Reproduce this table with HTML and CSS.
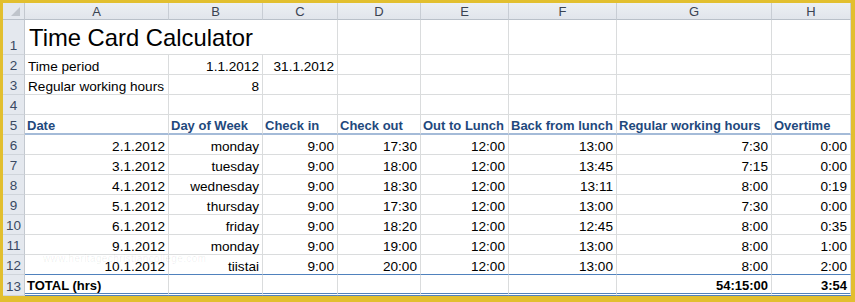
FILE: index.html
```html
<!DOCTYPE html>
<html>
<head>
<meta charset="utf-8">
<link rel="stylesheet" href="styles.css">
</head>
<body>
<div class="frame">
  <div class="sheet">
    <div class="corner"><span class="tri"></span></div>
    <div class="colhead">A</div><div class="colhead">B</div><div class="colhead">C</div><div class="colhead">D</div><div class="colhead">E</div><div class="colhead">F</div><div class="colhead">G</div><div class="colhead">H</div>

    <div class="rowhead">1</div>
    <div class="cell title span3">Time Card Calculator</div><div class="cell"></div><div class="cell"></div><div class="cell"></div><div class="cell"></div><div class="cell"></div>

    <div class="rowhead">2</div>
    <div class="cell">Time period</div><div class="cell num">1.1.2012</div><div class="cell num">31.1.2012</div><div class="cell"></div><div class="cell"></div><div class="cell"></div><div class="cell"></div><div class="cell"></div>

    <div class="rowhead">3</div>
    <div class="cell">Regular working hours</div><div class="cell num">8</div><div class="cell"></div><div class="cell"></div><div class="cell"></div><div class="cell"></div><div class="cell"></div><div class="cell"></div>

    <div class="rowhead">4</div>
    <div class="cell"></div><div class="cell"></div><div class="cell"></div><div class="cell"></div><div class="cell"></div><div class="cell"></div><div class="cell"></div><div class="cell"></div>

    <div class="rowhead">5</div>
    <div class="cell hdr">Date</div><div class="cell hdr">Day of Week</div><div class="cell hdr">Check in</div><div class="cell hdr">Check out</div><div class="cell hdr">Out to Lunch</div><div class="cell hdr">Back from lunch</div><div class="cell hdr">Regular working hours</div><div class="cell hdr">Overtime</div>

    <div class="rowhead">6</div>
    <div class="cell num">2.1.2012</div><div class="cell num">monday</div><div class="cell num">9:00</div><div class="cell num">17:30</div><div class="cell num">12:00</div><div class="cell num">13:00</div><div class="cell num">7:30</div><div class="cell num">0:00</div>

    <div class="rowhead">7</div>
    <div class="cell num">3.1.2012</div><div class="cell num">tuesday</div><div class="cell num">9:00</div><div class="cell num">18:00</div><div class="cell num">12:00</div><div class="cell num">13:45</div><div class="cell num">7:15</div><div class="cell num">0:00</div>

    <div class="rowhead">8</div>
    <div class="cell num">4.1.2012</div><div class="cell num">wednesday</div><div class="cell num">9:00</div><div class="cell num">18:30</div><div class="cell num">12:00</div><div class="cell num">13:11</div><div class="cell num">8:00</div><div class="cell num">0:19</div>

    <div class="rowhead">9</div>
    <div class="cell num">5.1.2012</div><div class="cell num">thursday</div><div class="cell num">9:00</div><div class="cell num">17:30</div><div class="cell num">12:00</div><div class="cell num">13:00</div><div class="cell num">7:30</div><div class="cell num">0:00</div>

    <div class="rowhead">10</div>
    <div class="cell num">6.1.2012</div><div class="cell num">friday</div><div class="cell num">9:00</div><div class="cell num">18:20</div><div class="cell num">12:00</div><div class="cell num">12:45</div><div class="cell num">8:00</div><div class="cell num">0:35</div>

    <div class="rowhead">11</div>
    <div class="cell num">9.1.2012</div><div class="cell num">monday</div><div class="cell num">9:00</div><div class="cell num">19:00</div><div class="cell num">12:00</div><div class="cell num">13:00</div><div class="cell num">8:00</div><div class="cell num">1:00</div>

    <div class="rowhead">12</div>
    <div class="cell num pre">10.1.2012</div><div class="cell num pre">tiistai</div><div class="cell num pre">9:00</div><div class="cell num pre">20:00</div><div class="cell num pre">12:00</div><div class="cell num pre">13:00</div><div class="cell num pre">8:00</div><div class="cell num pre">2:00</div>

    <div class="rowhead">13</div>
    <div class="cell total">TOTAL (hrs)</div><div class="cell total"></div><div class="cell total"></div><div class="cell total"></div><div class="cell total"></div><div class="cell total"></div><div class="cell total num">54:15:00</div><div class="cell total num">3:54</div>

    <div class="watermark">www.heritagechristiancollege.com</div>
  </div>
</div>
</body>
</html>
```

FILE: styles.css
```css
html, body {
  margin: 0;
  padding: 0;
}
body {
  background: #e2bf2f;
  width: 855px;
  height: 302px;
  overflow: hidden;
  font-family: "Liberation Sans", Arial, sans-serif;
}
.frame {
  padding: 3px 4px 0 3px;
}
.sheet {
  position: relative;
  display: grid;
  grid-template-columns: 22px 144px 94px 75px 83px 88px 108px 155px 79px;
  grid-template-rows: 17px 35px repeat(11, 20px) 21px;
  background: #ffffff;
  width: 848px;
}
.corner {
  position: relative;
  background: #e4e8ee;
  border-right: 1px solid #c3c8cf;
  border-bottom: 1px solid #b9c0c9;
}
.tri {
  position: absolute;
  right: 4px;
  bottom: 3px;
  width: 0;
  height: 0;
  border-left: 9px solid transparent;
  border-bottom: 9px solid #bfc4cb;
}
.colhead {
  background: linear-gradient(#eceff3, #e1e5eb);
  border-right: 1px solid #c8cdd4;
  border-bottom: 1px solid #b9c0c9;
  color: #3a4352;
  font-size: 13px;
  display: flex;
  align-items: center;
  justify-content: center;
}
.rowhead {
  background: #e4e8ee;
  border-right: 1px solid #c3c8cf;
  border-bottom: 1px solid #cfd4da;
  color: #3a4a63;
  font-size: 13.5px;
  display: flex;
  align-items: flex-end;
  justify-content: center;
  padding-bottom: 1px;
  box-sizing: border-box;
}
.cell {
  box-sizing: border-box;
  border-right: 1px solid #dadcdd;
  border-bottom: 1px solid #dadcdd;
  font-size: 13.6px;
  color: #000;
  display: flex;
  align-items: flex-end;
  padding: 0 3px 0 3px;
  white-space: nowrap;
  overflow: visible;
}
.num {
  justify-content: flex-end;
}
.title {
  grid-column: span 3;
  font-size: 23.8px;
  padding-left: 4px;
  padding-bottom: 2px;
}
.hdr {
  font-weight: bold;
  color: #1f497d;
  font-size: 13px;
  border-bottom: 2px solid #a4bbd8;
  padding-left: 2px;
  padding-bottom: 0;
}
.pre {
  border-bottom: 1px solid #4f81bd;
}
.total {
  font-weight: bold;
  font-size: 13px;
  border-bottom: 3px double #4f81bd;
  padding-left: 2px;
}
.watermark {
  position: absolute;
  left: 40px;
  top: 251px;
  font-size: 10px;
  line-height: 9px;
  color: rgba(0, 0, 0, 0.07);
  letter-spacing: 0.4px;
  pointer-events: none;
}
```
